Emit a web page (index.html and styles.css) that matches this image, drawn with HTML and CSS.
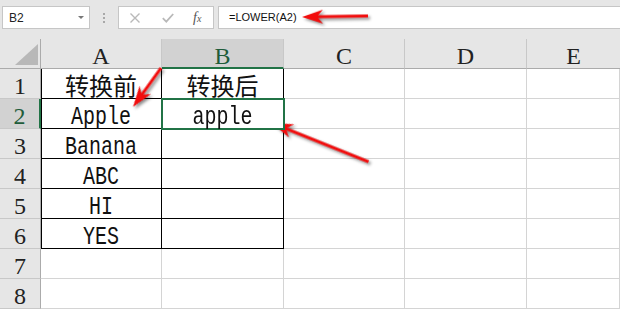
FILE: index.html
```html
<!DOCTYPE html>
<html lang="zh-CN">
<head>
    <meta charset="UTF-8">
    <title>LOWER</title>
    <link rel="stylesheet" href="styles.css">
</head>
<body>
    <div class="toolbar">
        <div class="namebox"><span>B2</span><i class="caret"></i></div>
        <div class="grip"><b></b><b></b><b></b></div>
        <div class="fbtns">
            <svg class="ico-x" width="12" height="10" viewBox="0 0 12 10"><path d="M1.5 0.5 L10.5 9.5 M10.5 0.5 L1.5 9.5" stroke="#b9b9b9" stroke-width="1.4" fill="none"/></svg>
            <svg class="ico-ok" width="12" height="10" viewBox="0 0 12 10"><path d="M0.8 5.2 L4.3 8.6 L11.2 1" stroke="#b9b9b9" stroke-width="1.8" fill="none"/></svg>
            <span class="fx">f<small>x</small></span>
        </div>
        <div class="formula">=LOWER(A2)</div>
    </div>

    <div class="sheet">
        <div class="corner"><svg width="40" height="29" viewBox="0 0 40 29"><polygon points="38,5 38,26 15,26" fill="#b8b8b8"/></svg></div>
        <div class="ch">A</div>
        <div class="ch on">B</div>
        <div class="ch">C</div>
        <div class="ch">D</div>
        <div class="ch last">E</div>

        <div class="rh">1</div>
        <div class="cell tb tl cn">转换前</div>
        <div class="cell tb cn">转换后</div>
        <div class="cell"></div>
        <div class="cell"></div>
        <div class="cell"></div>

        <div class="rh on">2</div>
        <div class="cell tb tl"><span class="v">Apple</span></div>
        <div class="cell tb sel"><span class="v">apple</span></div>
        <div class="cell"></div>
        <div class="cell"></div>
        <div class="cell"></div>

        <div class="rh">3</div>
        <div class="cell tb tl"><span class="v">Banana</span></div>
        <div class="cell tb"></div>
        <div class="cell"></div>
        <div class="cell"></div>
        <div class="cell"></div>

        <div class="rh">4</div>
        <div class="cell tb tl"><span class="v">ABC</span></div>
        <div class="cell tb"></div>
        <div class="cell"></div>
        <div class="cell"></div>
        <div class="cell"></div>

        <div class="rh">5</div>
        <div class="cell tb tl"><span class="v">HI</span></div>
        <div class="cell tb"></div>
        <div class="cell"></div>
        <div class="cell"></div>
        <div class="cell"></div>

        <div class="rh">6</div>
        <div class="cell tb tl"><span class="v">YES</span></div>
        <div class="cell tb"></div>
        <div class="cell"></div>
        <div class="cell"></div>
        <div class="cell"></div>

        <div class="rh">7</div>
        <div class="cell"></div>
        <div class="cell"></div>
        <div class="cell"></div>
        <div class="cell"></div>
        <div class="cell"></div>

        <div class="rh">8</div>
        <div class="cell"></div>
        <div class="cell"></div>
        <div class="cell"></div>
        <div class="cell"></div>
        <div class="cell"></div>
    </div>

    <!-- red callout arrows drawn over the sheet -->
    <svg class="arrows" width="620" height="309" viewBox="0 0 620 309">
        <g class="arw" fill="#f20d0d" stroke="#f20d0d">
            <g transform="translate(302 17) rotate(179.1)">
                <line x1="-66" y1="0" x2="-15" y2="0" stroke-width="3"/>
                <path d="M0 0 L-21 -7 L-15 0 L-21 7 Z" stroke="none"/>
            </g>
            <g transform="translate(133 107) rotate(125.7)">
                <line x1="-48" y1="0" x2="-15" y2="0" stroke-width="3"/>
                <path d="M0 0 L-21 -7 L-15 0 L-21 7 Z" stroke="none"/>
            </g>
            <g transform="translate(272 123) rotate(-158.1)">
                <line x1="-104" y1="0" x2="-15" y2="0" stroke-width="3"/>
                <path d="M0 0 L-21 -7 L-15 0 L-21 7 Z" stroke="none"/>
            </g>
        </g>
    </svg>
</body>
</html>
```

FILE: styles.css
```css
body {
    margin: 0;
    width: 620px;
    height: 309px;
    overflow: hidden;
    position: relative;
    background-color: #FFF;
    font-family: "Liberation Sans", Arial, sans-serif;
}

/* formula bar */
.toolbar {
    display: flex;
    align-items: flex-start;
    height: 39px;
    box-sizing: border-box;
    padding: 6px 0 0 2px;
    background-color: #E6E6E6;
}
.namebox {
    width: 88px;
    height: 23px;
    box-sizing: border-box;
    background-color: #FFF;
    border: 1px solid #C6C6C6;
    display: flex;
    align-items: center;
    justify-content: space-between;
    padding: 0 5px 0 6px;
    font-size: 12px;
    color: #222;
}
.caret {
    width: 0;
    height: 0;
    border-left: 3px solid transparent;
    border-right: 3px solid transparent;
    border-top: 3px solid #777;
}
.grip {
    width: 28px;
    height: 23px;
    display: flex;
    flex-direction: column;
    align-items: center;
    justify-content: center;
    gap: 2px;
}
.grip b {
    width: 2px;
    height: 2px;
    background-color: #A8A8A8;
}
.fbtns {
    width: 96px;
    height: 23px;
    box-sizing: border-box;
    background-color: #FFF;
    border: 1px solid #C6C6C6;
    display: flex;
    align-items: center;
}
.ico-x {
    margin-left: 10px;
}
.ico-ok {
    margin-left: 21px;
}
.fx {
    margin-left: 19px;
    font-family: "Liberation Serif", serif;
    font-style: italic;
    font-size: 14px;
    color: #555;
}
.fx small {
    font-size: 10px;
}
.formula {
    flex: 1;
    margin-left: 4px;
    height: 23px;
    box-sizing: border-box;
    background-color: #FFF;
    border: 1px solid #C6C6C6;
    border-right: none;
    padding-left: 10px;
    font-size: 11px;
    line-height: 21px;
    color: #111;
}

/* grid */
.sheet {
    display: grid;
    grid-template-columns: 41px 121px 122px 121px 122px 93px;
    grid-auto-rows: 30px;
}
.sheet > div {
    box-sizing: border-box;
    text-align: center;
}
.corner {
    background-color: #E6E6E6;
    border-right: 1px solid #ABABAB;
    border-bottom: 1px solid #ABABAB;
}
.corner svg {
    display: block;
}
.ch, .rh {
    background-color: #E6E6E6;
    font-family: "Liberation Serif", "Times New Roman", serif;
    font-size: 24px;
    line-height: 26px;
    padding-top: 4px;
    color: #222;
}
.ch {
    border-right: 1px solid #C8C8C8;
    border-bottom: 1px solid #ABABAB;
}
.ch.last {
    border-right: none;
}
.rh {
    border-right: 1px solid #ABABAB;
    border-bottom: 1px solid #C8C8C8;
}
.ch.on {
    background-color: #D2D2D2;
    color: #1F5C3A;
    border-bottom: 2px solid #217346;
}
.rh.on {
    background-color: #D2D2D2;
    color: #1F5C3A;
    border-right: 2px solid #217346;
}
.cell {
    background-color: #FFF;
    border-right: 1px solid #D4D4D4;
    border-bottom: 1px solid #D4D4D4;
    padding-top: 10px;
    line-height: 20px;
}
.cell.tb {
    border-right-color: #000;
    border-bottom-color: #000;
}
.cell.tl {
    box-shadow: inset 1px 0 0 #000;
}
.cell.cn {
    padding-top: 4px;
    font-family: "Noto Sans CJK SC", sans-serif;
    font-size: 24px;
    line-height: 24px;
    color: #111;
}
.cell.sel {
    position: relative;
    z-index: 1;
    outline: 2px solid #217346;
    outline-offset: -1px;
}
.v {
    display: inline-block;
    font-family: "Liberation Mono", "Courier New", monospace;
    font-size: 20px;
    line-height: 20px;
    color: #111;
    transform: scaleY(1.3);
    transform-origin: 50% 15px;
}

/* callouts */
.arrows {
    position: absolute;
    left: 0;
    top: 0;
    pointer-events: none;
}
.arw {
    filter: drop-shadow(2px 2px 1.5px rgba(0, 0, 0, 0.45));
}
```
